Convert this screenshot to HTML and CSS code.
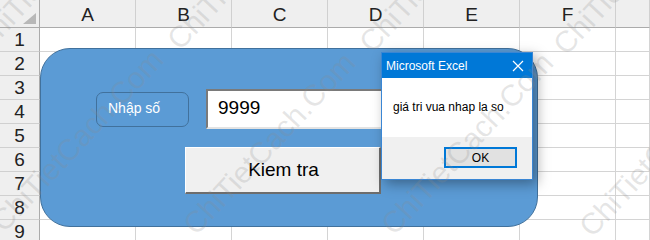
FILE: index.html
```html
<!DOCTYPE html>
<html>
<head>
<meta charset="utf-8">
<link rel="stylesheet" href="styles.css">
</head>
<body>
<div class="page">
  <div class="sheet">
    <div class="corner"><svg class="corner-tri" width="16" height="12" viewBox="0 0 16 12"><polygon points="15,0 15,11 2,11" fill="#b8b8b8"/></svg></div>
    <div class="colhead">A</div><div class="colhead">B</div><div class="colhead">C</div><div class="colhead">D</div><div class="colhead">E</div><div class="colhead">F</div><div class="colhead last"></div>

    <div class="rowhead">1</div><div class="cell"></div><div class="cell"></div><div class="cell"></div><div class="cell"></div><div class="cell"></div><div class="cell"></div><div class="cell"></div>
    <div class="rowhead">2</div><div class="cell"></div><div class="cell"></div><div class="cell"></div><div class="cell"></div><div class="cell"></div><div class="cell"></div><div class="cell"></div>
    <div class="rowhead">3</div><div class="cell"></div><div class="cell"></div><div class="cell"></div><div class="cell"></div><div class="cell"></div><div class="cell"></div><div class="cell"></div>
    <div class="rowhead">4</div><div class="cell"></div><div class="cell"></div><div class="cell"></div><div class="cell"></div><div class="cell"></div><div class="cell"></div><div class="cell"></div>
    <div class="rowhead">5</div><div class="cell"></div><div class="cell"></div><div class="cell"></div><div class="cell"></div><div class="cell"></div><div class="cell"></div><div class="cell"></div>
    <div class="rowhead">6</div><div class="cell"></div><div class="cell"></div><div class="cell"></div><div class="cell"></div><div class="cell"></div><div class="cell"></div><div class="cell"></div>
    <div class="rowhead">7</div><div class="cell"></div><div class="cell"></div><div class="cell"></div><div class="cell"></div><div class="cell"></div><div class="cell"></div><div class="cell"></div>
    <div class="rowhead">8</div><div class="cell"></div><div class="cell"></div><div class="cell"></div><div class="cell"></div><div class="cell"></div><div class="cell"></div><div class="cell"></div>
    <div class="rowhead">9</div><div class="cell"></div><div class="cell"></div><div class="cell"></div><div class="cell"></div><div class="cell"></div><div class="cell"></div><div class="cell"></div>
  </div>

  <div class="shape">
    <div class="form-row">
      <div class="label">Nhập số</div>
      <div class="textbox">9999</div>
    </div>
    <div class="btn-row">
      <div class="cmd-btn">Kiem tra</div>
    </div>
  </div>

  <div class="dialog">
    <div class="dlg-title">
      <span class="dlg-title-text">Microsoft Excel</span>
      <svg class="dlg-close" width="12" height="12" viewBox="0 0 12 12"><path d="M1 1 L11 11 M11 1 L1 11" stroke="#fff" stroke-width="1.2" fill="none"/></svg>
    </div>
    <div class="dlg-body">giá tri vua nhap la so</div>
    <div class="dlg-footer">
      <div class="ok-btn">OK</div>
    </div>
  </div>

  <div class="wm" style="left:-10px;top:28px">ChiTietCach.Com</div>
  <div class="wm" style="left:184px;top:25px">ChiTietCach.Com</div>
  <div class="wm" style="left:376px;top:28px">ChiTietCach.Com</div>
  <div class="wm" style="left:570px;top:30px">ChiTietCach.Com</div>
  <div class="wm" style="left:8px;top:207px">ChiTietCach.Com</div>
  <div class="wm" style="left:200px;top:210px">ChiTietCach.Com</div>
  <div class="wm" style="left:398px;top:210px">ChiTietCach.Com</div>
  <div class="wm" style="left:596px;top:212px">ChiTietCach.Com</div>
</div>
</body>
</html>
```
FILE: styles.css
```css
html, body {
  margin: 0;
  padding: 0;
  background: #ffffff;
  overflow: hidden;
}
.page {
  position: relative;
  width: 650px;
  height: 240px;
  overflow: hidden;
  font-family: "Liberation Sans", Arial, sans-serif;
}
.sheet {
  display: grid;
  grid-template-columns: 40px 96px 96px 96px 96px 96px 96px 1fr;
  grid-template-rows: 28px repeat(9, 24px);
  width: 650px;
}
.sheet > div {
  box-sizing: border-box;
  border-right: 1px solid #d4d4d4;
  border-bottom: 1px solid #d4d4d4;
}
.corner {
  background: #efefef;
  border-right: 1px solid #ababab !important;
  border-bottom: 1px solid #ababab !important;
  display: flex;
  align-items: flex-end;
  justify-content: flex-end;
  padding: 0 2px 2px 0;
}
.corner-tri { display: block; }
.colhead {
  background: #efefef;
  border-right: 1px solid #d0d0d0 !important;
  border-bottom: 1px solid #ababab !important;
  font-size: 19px;
  color: #222;
  display: flex;
  align-items: center;
  justify-content: center;
  padding-top: 2px;
}
.rowhead {
  background: #efefef;
  border-right: 1px solid #ababab !important;
  border-bottom: 1px solid #d0d0d0 !important;
  font-size: 19px;
  color: #222;
  display: flex;
  align-items: center;
  justify-content: center;
}
.cell { background: #fff; }

.shape {
  position: absolute;
  left: 40px;
  top: 48px;
  width: 498px;
  height: 179px;
  box-sizing: border-box;
  background: #5b9bd5;
  border: 1px solid #41719c;
  border-radius: 30px;
  padding: 40px 0 0 55px;
}
.form-row {
  display: flex;
  align-items: center;
  gap: 17px;
}
.label {
  box-sizing: border-box;
  width: 93px;
  height: 35px;
  border: 1px solid #41719c;
  border-radius: 7px;
  color: #fff;
  font-size: 14px;
  display: flex;
  align-items: center;
  padding-left: 11px;
  padding-bottom: 2px;
}
.textbox {
  box-sizing: border-box;
  width: 230px;
  height: 40px;
  background: #fff;
  border-top: 2px solid #7a7a7a;
  border-left: 2px solid #7a7a7a;
  border-bottom: 2px solid #e3e3e3;
  border-right: 2px solid #e3e3e3;
  font-size: 19px;
  color: #000;
  padding: 6px 0 0 10px;
}
.btn-row {
  margin-top: 18px;
  padding-left: 89px;
}
.cmd-btn {
  box-sizing: border-box;
  width: 196px;
  height: 47px;
  background: #f0f0f0;
  border-top: 1px solid #ffffff;
  border-left: 1px solid #ffffff;
  border-bottom: 2px solid #6d6d6d;
  border-right: 2px solid #6d6d6d;
  font-size: 19px;
  color: #000;
  display: flex;
  align-items: center;
  justify-content: center;
  padding-left: 2px;
}

.dialog {
  position: absolute;
  left: 381px;
  top: 52px;
  width: 152px;
  height: 128px;
  box-sizing: border-box;
  border: 1px solid #3a86d4;
  background: #fff;
  box-shadow: 4px 4px 12px rgba(0, 0, 0, 0.35);
  display: flex;
  flex-direction: column;
}
.dlg-title {
  height: 25px;
  background: #0078d7;
  color: #fff;
  font-size: 12px;
  display: flex;
  align-items: center;
  justify-content: space-between;
  padding: 0 8px 0 4px;
  flex: none;
}
.dlg-title-text { padding-top: 1px; }
.dlg-close { display: block; margin-top: 1px; }
.dlg-body {
  height: 59px;
  box-sizing: border-box;
  padding: 22px 0 0 11px;
  font-size: 12px;
  line-height: 14px;
  color: #000;
  flex: none;
}
.dlg-footer {
  flex: 1;
  background: #f0f0f0;
  display: flex;
  justify-content: flex-end;
  align-items: flex-start;
  padding: 10px 15px 0 0;
}
.ok-btn {
  box-sizing: border-box;
  width: 73px;
  height: 21px;
  background: #e1e1e1;
  border: 2px solid #0078d7;
  font-size: 12px;
  color: #000;
  display: flex;
  align-items: center;
  justify-content: center;
}

.wm {
  position: absolute;
  font-family: "Liberation Sans", Arial, sans-serif;
  font-size: 30px;
  line-height: 30px;
  white-space: nowrap;
  color: rgba(140, 140, 140, 0.22);
  transform-origin: 0 100%;
  transform: rotate(-47deg);
  pointer-events: none;
}
```
